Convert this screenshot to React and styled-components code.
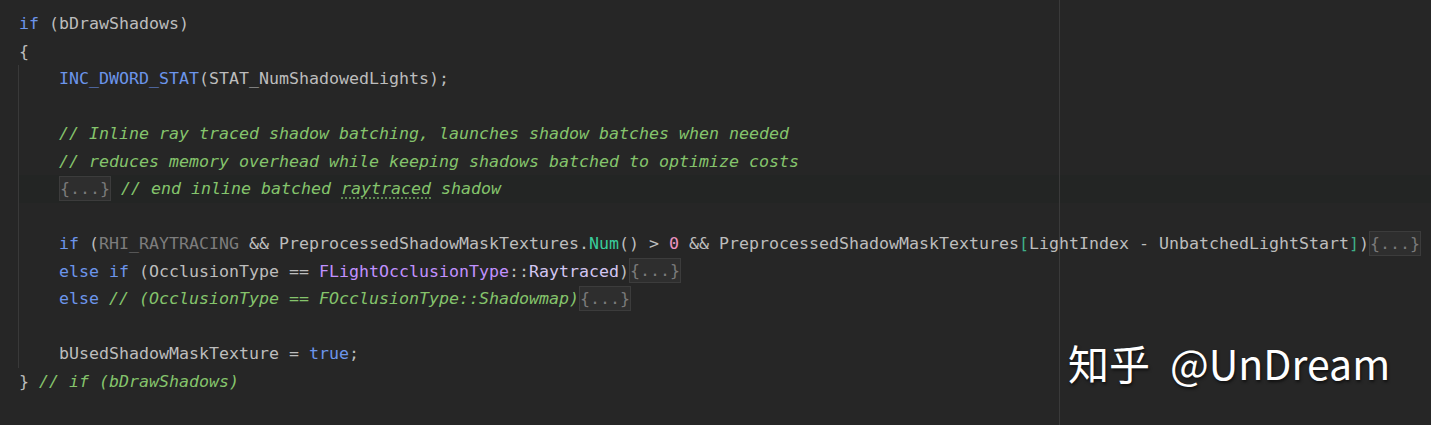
import React from "react";
import styled, { createGlobalStyle } from "styled-components";

const Global = createGlobalStyle`
  html, body { margin: 0; padding: 0; background: #262626; }
  body { width: 1431px; height: 425px; overflow: hidden; }
`;

const Editor = styled.div`
  position: relative;
  width: 1431px;
  height: 425px;
  background: #262626;
  box-sizing: border-box;
  padding: 10px 0 0 19px;
  font-family: "DejaVu Sans Mono", "Liberation Mono", monospace;
  font-size: 16.61px;
  color: #bdbdbd;
  overflow: hidden;
`;

const Margin = styled.div`
  position: absolute;
  top: 0;
  bottom: 0;
  left: 1059px;
  width: 1px;
  background: #3a3a3a;
`;

const Line = styled.div`
  height: 27.5px;
  line-height: 27.5px;
  white-space: pre;
  margin-left: ${(p) => (p.$caret ? "-40px" : "0")};
  padding-left: ${(p) => (p.$caret ? "40px" : "0")};
  background: ${(p) => (p.$caret ? "#232524" : "transparent")};
`;

const Block = styled.div`
  border-left: 1px solid #393939;
  margin-left: -1px;
  padding-left: 40px;
`;

const Tok = styled.span`
  color: ${(p) => p.$c || "#bdbdbd"};
  font-style: ${(p) => (p.$i ? "italic" : "normal")};
`;

const Typo = styled.span`
  text-decoration: underline dotted #6a9b58;
  text-underline-offset: 4px;
`;

const Fold = styled.span`
  display: inline-block;
  vertical-align: middle;
  height: 25px;
  line-height: 23px;
  margin-top: -3px;
  box-sizing: border-box;
  border: 1px solid #3c3c3c;
  background: #2e2e2e;
  color: #7a7a7a;
`;

const Watermark = styled.div`
  position: absolute;
  left: 1068px;
  top: 336px;
  display: flex;
  gap: 20px;
  font-family: "Noto Sans CJK SC", "Noto Sans", sans-serif;
  font-size: 41px;
  line-height: 52px;
  color: #ffffff;
  text-shadow: 1px 2px 3px rgba(0, 0, 0, 0.6);
  white-space: pre;
`;

const KW = "#6c95eb";
const CM = "#85c46c";
const DIM = "#7d7d7d";
const FN = "#39cc9b";
const NUM = "#ed94c0";
const ENUM = "#c191ff";
const MEM = "#d3c6f2";
const BR = "#3fae87";

export default function App() {
  return (
    <>
      <Global />
      <Editor>
        <Margin />
        <Line>
          <Tok $c={KW}>if</Tok> (bDrawShadows)
        </Line>
        <Line>{"{"}</Line>
        <Block>
          <Line>
            <Tok $c={KW}>INC_DWORD_STAT</Tok>(STAT_NumShadowedLights);
          </Line>
          <Line> </Line>
          <Line>
            <Tok $c={CM} $i>
              // Inline ray traced shadow batching, launches shadow batches when needed
            </Tok>
          </Line>
          <Line>
            <Tok $c={CM} $i>
              // reduces memory overhead while keeping shadows batched to optimize costs
            </Tok>
          </Line>
          <Line $caret>
            <Fold>{"{...}"}</Fold>
            <Tok $c={CM} $i>
              {" // end inline batched "}
              <Typo>raytraced</Typo>
              {" shadow"}
            </Tok>
          </Line>
          <Line> </Line>
          <Line>
            <Tok $c={KW}>if</Tok> (<Tok $c={DIM}>RHI_RAYTRACING</Tok> &amp;&amp;
            PreprocessedShadowMaskTextures.<Tok $c={FN}>Num</Tok>() &gt;{" "}
            <Tok $c={NUM}>0</Tok> &amp;&amp; PreprocessedShadowMaskTextures
            <Tok $c={BR}>[</Tok>LightIndex - UnbatchedLightStart<Tok $c={BR}>]</Tok>)
            <Fold>{"{...}"}</Fold>
          </Line>
          <Line>
            <Tok $c={KW}>else if</Tok> (OcclusionType =={" "}
            <Tok $c={ENUM}>FLightOcclusionType</Tok>::<Tok $c={MEM}>Raytraced</Tok>)
            <Fold>{"{...}"}</Fold>
          </Line>
          <Line>
            <Tok $c={KW}>else</Tok>
            <Tok $c={CM} $i>
              {" // (OcclusionType == FOcclusionType::Shadowmap)"}
            </Tok>
            <Fold>{"{...}"}</Fold>
          </Line>
          <Line> </Line>
          <Line>
            bUsedShadowMaskTexture = <Tok $c={KW}>true</Tok>;
          </Line>
        </Block>
        <Line>
          {"} "}
          <Tok $c={CM} $i>
            // if (bDrawShadows)
          </Tok>
        </Line>
        <Watermark>
          <span>知乎</span>
          <span>@UnDream</span>
        </Watermark>
      </Editor>
    </>
  );
}
